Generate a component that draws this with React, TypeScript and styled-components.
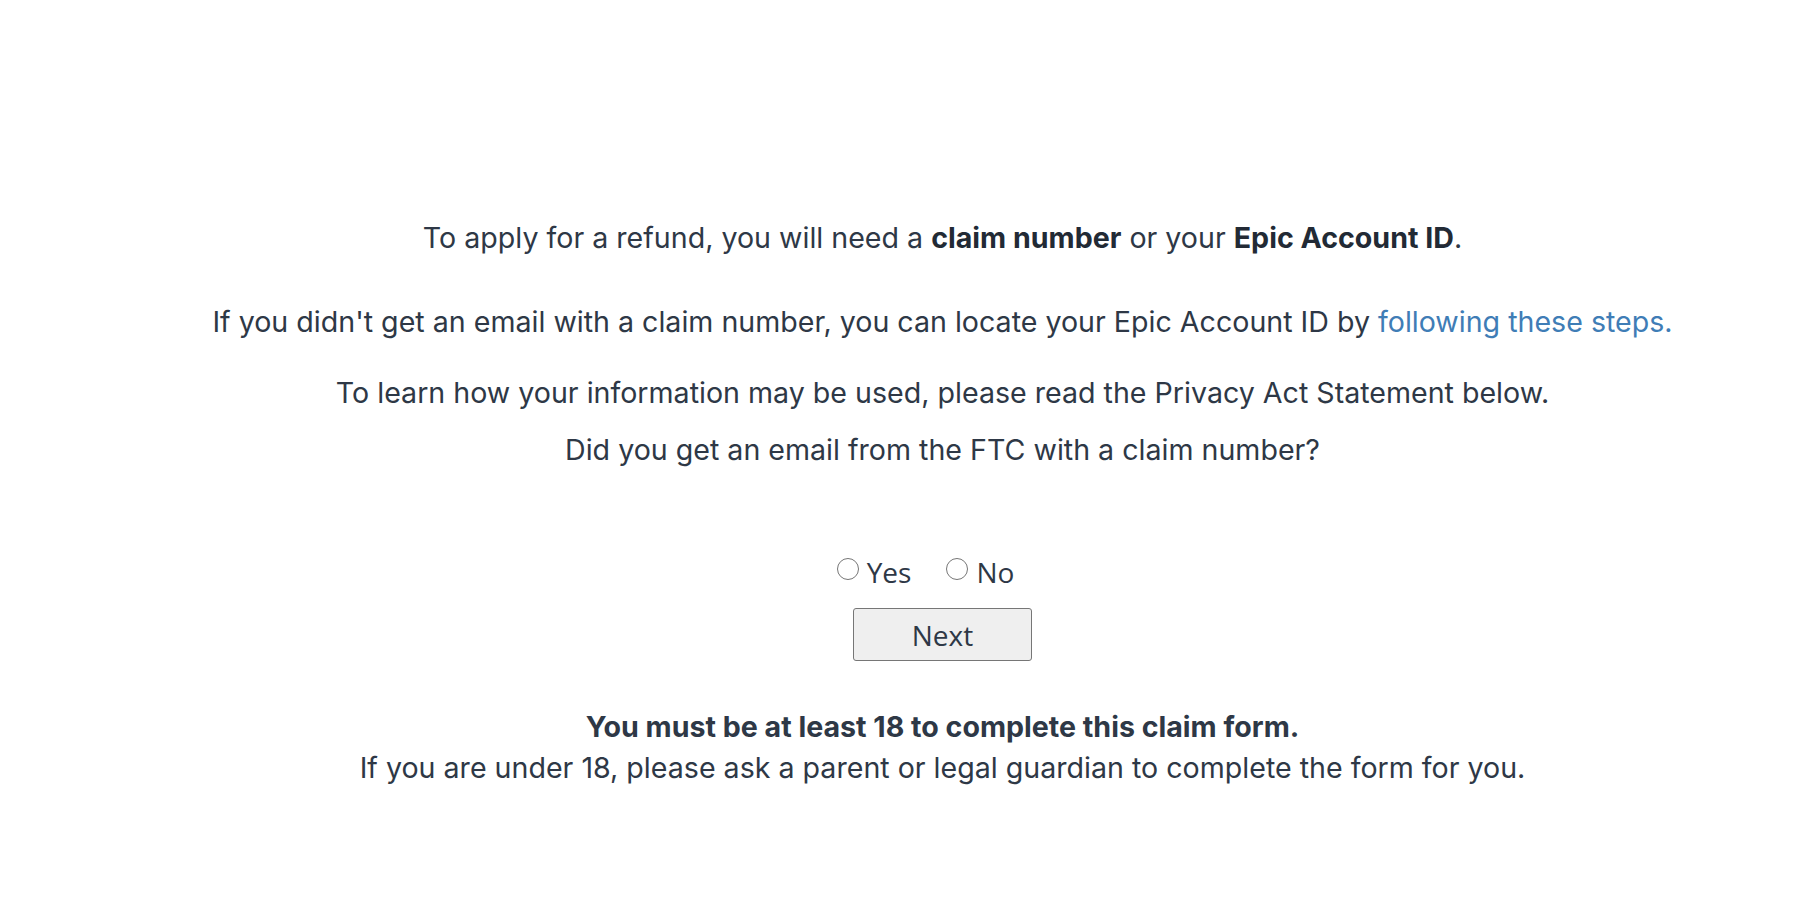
import React from "react";
import styled, { createGlobalStyle } from "styled-components";

const Global = createGlobalStyle`
  html, body { margin: 0; padding: 0; background: #ffffff; }
  body { font-family: Inter, "Noto Sans", sans-serif; color: #2e3846; }
`;

const Page = styled.main`
  display: flex;
  flex-direction: column;
  align-items: center;
  padding-top: 220px;
  padding-left: 85px;
  text-align: center;
`;

const Para = styled.p<{ $mt?: number }>`
  margin: ${(p) => p.$mt ?? 0}px 0 0;
  font-size: 28.6px;
  line-height: 36px;
  color: #2e3846;
`;

const Strong = styled.strong`
  font-weight: 700;
  color: #222a35;
`;

const Link = styled.a`
  color: #3f7db6;
  text-decoration: none;
`;

const RadioRow = styled.div`
  display: flex;
  align-items: center;
  gap: 35px;
  margin-top: 85px;
  padding-right: 34px;
  font-family: "Open Sans", "Noto Sans", sans-serif;
  font-size: 28px;
  color: #2e3846;
`;

const RadioLabel = styled.label`
  display: flex;
  align-items: center;
  gap: 8px;
`;

const Radio = styled.input`
  width: 22px;
  height: 22px;
  margin: 0;
  transform: translateY(-3px);
`;

const NextButton = styled.button`
  margin-top: 17px;
  width: 179px;
  height: 53px;
  border: 1px solid #767676;
  border-radius: 3px;
  background: #efefef;
  font-family: "Open Sans", "Noto Sans", sans-serif;
  font-size: 28px;
  color: #2e3846;
  padding: 0;
`;

const Warning = styled.p`
  margin: 45px 0 0;
  font-size: 28.6px;
  line-height: 41px;
  font-weight: 700;
  color: #2e3846;
`;

const Note = styled.p`
  margin: 0;
  font-size: 28.6px;
  line-height: 41px;
  color: #2e3846;
`;

export default function App() {
  return (
    <>
      <Global />
      <Page>
        <Para>
          To apply for a refund, you will need a <Strong>claim number</Strong> or your{" "}
          <Strong>Epic Account ID</Strong>.
        </Para>
        <Para $mt={48}>
          If you didn't get an email with a claim number, you can locate your Epic Account ID by{" "}
          <Link href="#">following these steps.</Link>
        </Para>
        <Para $mt={35}>
          To learn how your information may be used, please read the Privacy Act Statement below.
        </Para>
        <Para $mt={21}>Did you get an email from the FTC with a claim number?</Para>
        <RadioRow>
          <RadioLabel>
            <Radio type="radio" name="claim" value="yes" />
            Yes
          </RadioLabel>
          <RadioLabel>
            <Radio type="radio" name="claim" value="no" />
            No
          </RadioLabel>
        </RadioRow>
        <NextButton type="button">Next</NextButton>
        <Warning>You must be at least 18 to complete this claim form.</Warning>
        <Note>If you are under 18, please ask a parent or legal guardian to complete the form for you.</Note>
      </Page>
    </>
  );
}
